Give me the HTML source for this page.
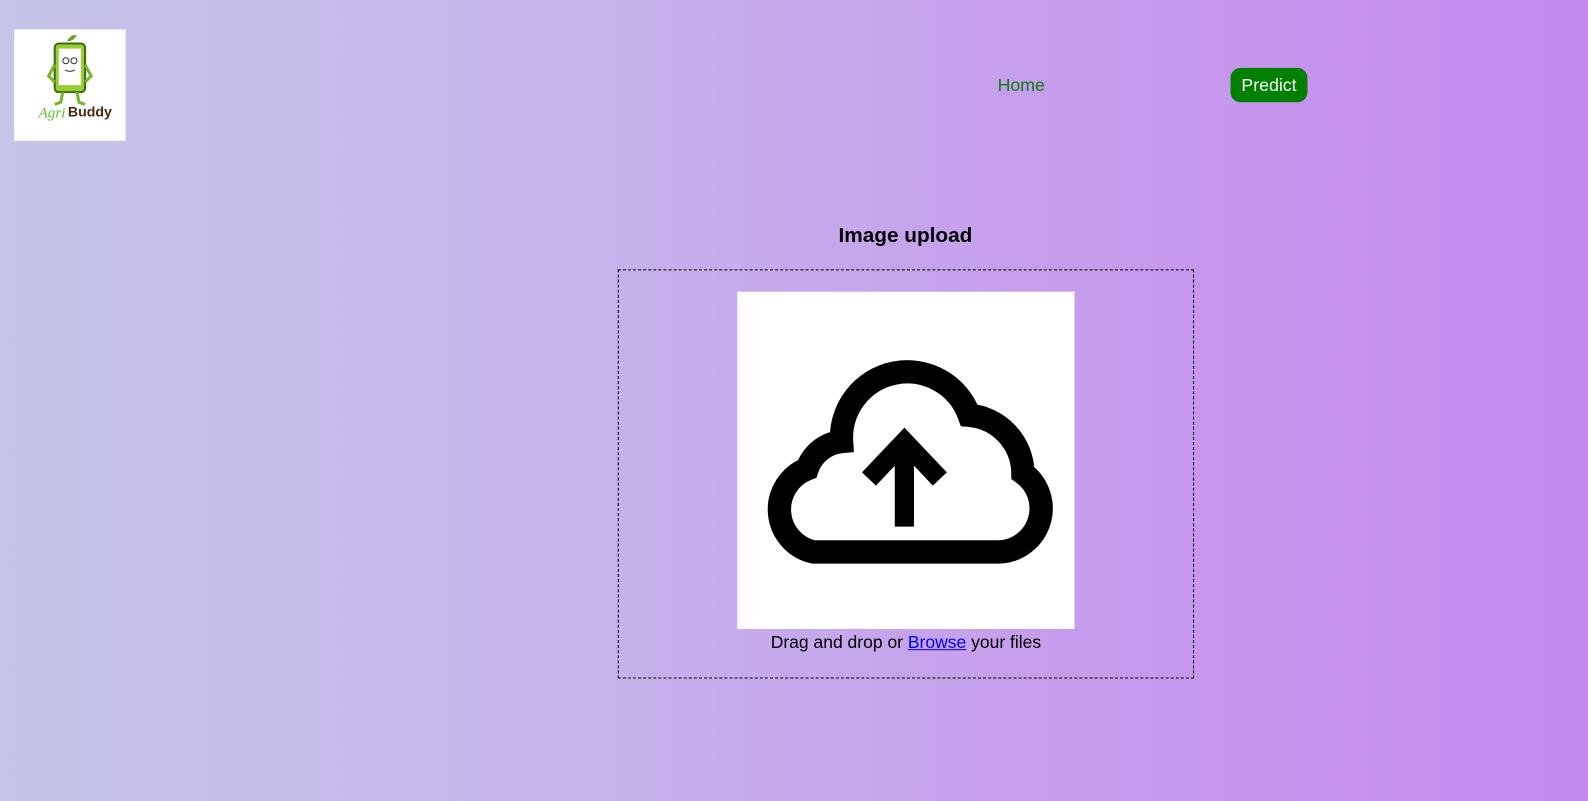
<!DOCTYPE html>
<html><head><meta charset="utf-8"><style>
html,body{margin:0;padding:0}
body{width:1588px;height:801px;overflow:hidden;position:relative;
background:linear-gradient(90deg,#c5c5e8 0%,#c6b4ec 35%,#c69eec 65%,#c589ef 100%);
font-family:"Liberation Sans",sans-serif;}
#w{position:absolute;left:0;top:0;width:1568px;height:791px;transform:scale(1.01276);transform-origin:0 0}
.logo{position:absolute;left:14px;top:29px;width:110px;height:110px;background:#fff}
.home{position:absolute;left:985px;top:74px;font-size:17.5px;color:#0a7d0a}
.btn{position:absolute;left:1215px;top:67px;width:76px;height:34px;border-radius:10px;background:#008000;color:#fff;font-size:17.5px;line-height:34px;text-align:center}
h3{position:absolute;left:0;width:1788px;top:221px;margin:0;font-size:20.5px;text-align:center;color:#000}
.box{position:absolute;left:610px;top:266px;width:567px;height:402px;border:1px dashed #000}
.img{position:absolute;left:728px;top:288px;width:333px;height:333px;background:#fff}
.txt{position:absolute;left:610px;width:569px;top:624px;text-align:center;font-size:17.3px;color:#000}
.txt a{color:#0000ee;text-decoration:underline}
</style></head><body><div id="w">
<div class="logo">
<svg width="110" height="110" viewBox="0 0 110 110">
<path d="M52 12 Q56 4 62 6 Q58 12 52 12Z" fill="#6aa52a"/>
<rect x="40" y="14" width="30" height="48" rx="4" fill="#9acd32" stroke="#3d6b12" stroke-width="2"/>
<rect x="44" y="19" width="22" height="36" fill="#fff"/>
<circle cx="51" cy="31" r="3" fill="#fff" stroke="#333"/><circle cx="59" cy="31" r="3" fill="#fff" stroke="#333"/>
<path d="M50 40 Q55 43 60 40" stroke="#333" fill="none"/>
<path d="M40 35 L34 46 L40 52 M70 35 L76 46 L70 52 M48 62 L46 72 L40 74 M62 62 L64 72 L70 74" stroke="#7cb32a" stroke-width="3" fill="none"/>
<text x="24" y="87" font-size="15" font-style="italic" fill="#5fbf2a" font-family="Liberation Serif,serif">Agri</text>
<text x="53" y="86" font-size="14" font-weight="bold" fill="#4a2a12">Buddy</text>
</svg></div>
<div class="home">Home</div>
<div class="btn">Predict</div>
<h3>Image upload</h3>
<div class="box"></div>
<div class="img"></div>
<svg style="position:absolute;left:0;top:0" width="1568" height="791">
<path d="M803 545 L986 545 A43 43 0 0 0 1010 467 A58 58 0 0 0 957 410 A65 65 0 0 0 831 436 A40 40 0 0 0 797 463 A43 43 0 0 0 803 545 Z" fill="none" stroke="#000" stroke-width="23" stroke-linejoin="miter"/>
<path d="M893 440 V520" stroke="#000" stroke-width="19"/>
<path d="M858 473 L893 436 L928 473" fill="none" stroke="#000" stroke-width="19"/>
</svg>
<div class="txt">Drag and drop or <a>Browse</a> your files</div>
</div></body></html>
